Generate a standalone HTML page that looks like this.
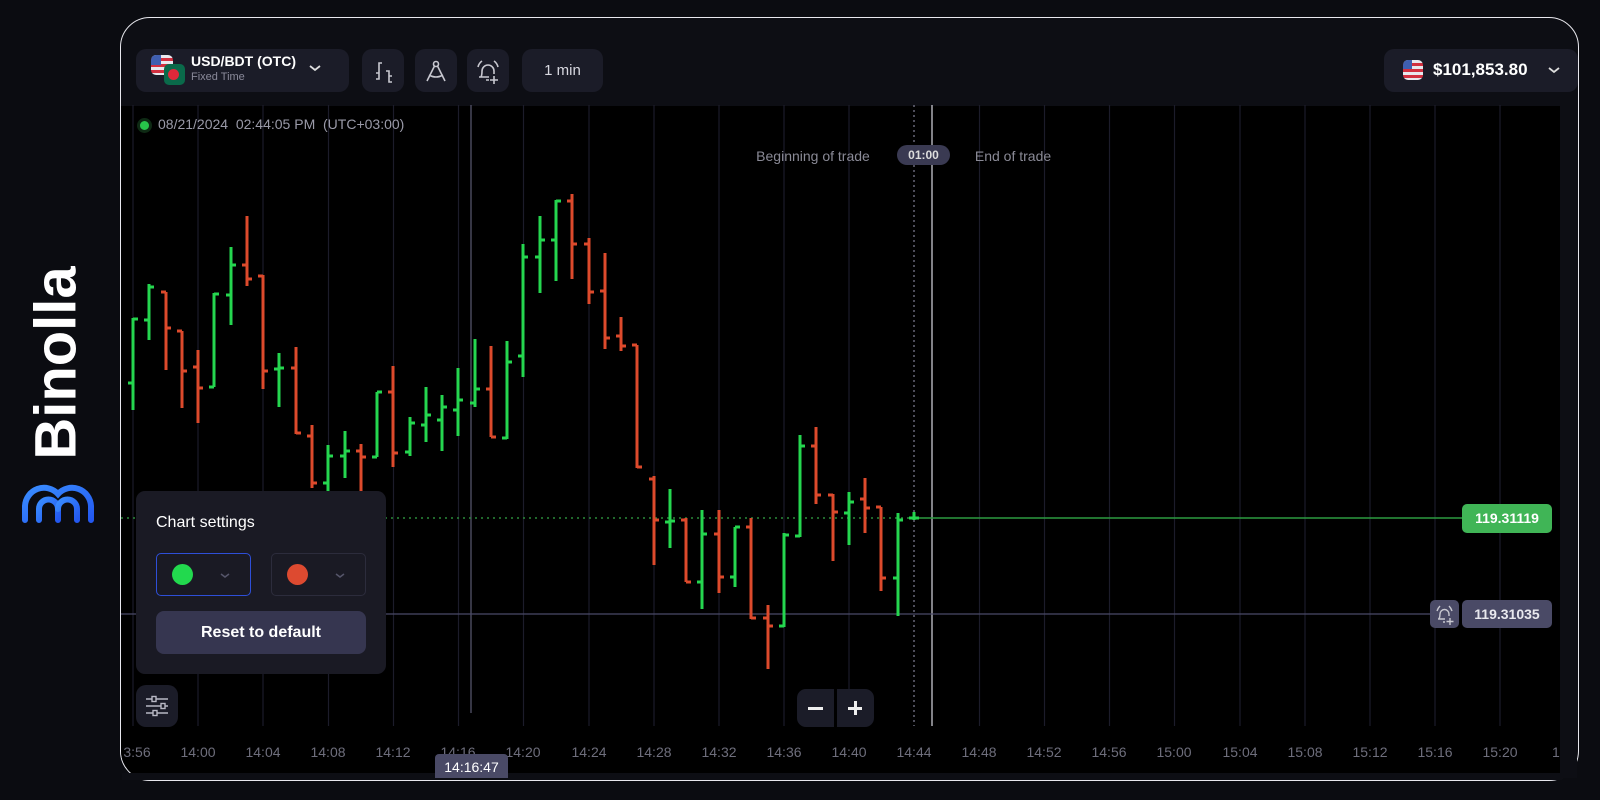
<!DOCTYPE html>
<html><head><meta charset="utf-8"><style>
*{margin:0;padding:0;box-sizing:border-box}
body{width:1600px;height:800px;background:#0b0c11;position:relative;overflow:hidden;font-family:"Liberation Sans",sans-serif;color:#fff}
.a{position:absolute}
.frame{left:120px;top:17px;width:1459px;height:764px;border:1.5px solid #e8e8ee;border-radius:30px;background:#0d0e14;overflow:hidden}
.btn{background:#1b1c28;border-radius:10px}
.ax{position:absolute;top:744px;font-size:14px;color:#6e6e7c;transform:translateX(-50%)}
</style></head><body>
<!-- logo -->
<div class="a" style="left:56px;top:363px;transform:translate(-50%,-50%) rotate(-90deg);font-size:58px;font-weight:bold;white-space:nowrap;letter-spacing:0px">Binolla</div>
<svg class="a" style="left:20px;top:482px" width="76" height="42" viewBox="0 0 76 42">
<defs><linearGradient id="g" x1="0" y1="0" x2="1" y2="1"><stop offset="0" stop-color="#3a8dff"/><stop offset="1" stop-color="#2358f0"/></linearGradient></defs>
<g fill="none" stroke="url(#g)" stroke-width="6" stroke-linecap="round">
<path d="M5 38 V24 A19 19 0 0 1 38 12 A19 19 0 0 1 71 24 V38"/>
<path d="M19 38 V27 A9.5 9.5 0 0 1 38 27 V38"/>
<path d="M38 27 A9.5 9.5 0 0 1 57 27 V38"/>
</g></svg>

<div class="a frame">
 <!-- chart black -->
 <div class="a" style="left:0;top:88px;width:1439px;height:668px;background:#000"></div>
</div>
<svg class="a" style="left:0;top:0" width="1600" height="800">
<g stroke="#1c1c2a" stroke-width="1.2">
<line x1="133" y1="105" x2="133" y2="726"/><line x1="198" y1="105" x2="198" y2="726"/><line x1="263" y1="105" x2="263" y2="726"/><line x1="328.5" y1="105" x2="328.5" y2="726"/><line x1="393.5" y1="105" x2="393.5" y2="726"/><line x1="458.5" y1="105" x2="458.5" y2="726"/><line x1="523.5" y1="105" x2="523.5" y2="726"/><line x1="589" y1="105" x2="589" y2="726"/><line x1="654" y1="105" x2="654" y2="726"/><line x1="719" y1="105" x2="719" y2="726"/><line x1="784" y1="105" x2="784" y2="726"/><line x1="849" y1="105" x2="849" y2="726"/><line x1="1044.5" y1="105" x2="1044.5" y2="726"/><line x1="1109.5" y1="105" x2="1109.5" y2="726"/><line x1="1174.5" y1="105" x2="1174.5" y2="726"/><line x1="1240" y1="105" x2="1240" y2="726"/><line x1="1305" y1="105" x2="1305" y2="726"/><line x1="1370" y1="105" x2="1370" y2="726"/><line x1="1435" y1="105" x2="1435" y2="726"/><line x1="1500" y1="105" x2="1500" y2="726"/><line x1="979.5" y1="105" x2="979.5" y2="726"/>
</g>
<line x1="471" y1="105" x2="471" y2="713" stroke="#54546a" stroke-width="1.3"/>
<line x1="914" y1="105" x2="914" y2="726" stroke="#77778a" stroke-width="1.3" stroke-dasharray="2 3"/>
<line x1="932" y1="105" x2="932" y2="726" stroke="#c8c8d0" stroke-width="1.3"/>
<line x1="121" y1="614" x2="1432" y2="614" stroke="#4a4a68" stroke-width="1.3"/>
<line x1="121" y1="518" x2="914" y2="518" stroke="#2a8a3a" stroke-width="1.5" stroke-dasharray="2 4"/>
<line x1="914" y1="518" x2="1462" y2="518" stroke="#2c9a40" stroke-width="1.5"/>
<g fill="none" stroke-width="3">
<g stroke="#25d64f">
<path d="M133 318V410M128 383H133M133 319H138"/><path d="M149 284V340M144 320H149M149 287H154"/><path d="M214 293V387M209 387H214M214 294H219"/><path d="M231 247V325M226 295H231M231 265H236"/><path d="M279 353V407M274 369H279M279 368H284"/><path d="M328 445V495M323 483H328M328 456H333"/><path d="M345 431V478M340 456H345M345 451H350"/><path d="M377 392V457M372 457H377M377 392H382"/><path d="M410 417V456M405 452H410M410 423H415"/><path d="M426 387V442M421 425H426M426 415H431"/><path d="M442 395V451M437 420H442M442 407H447"/><path d="M458 368V436M453 410H458M458 400H463"/><path d="M475 339V407M470 403H475M475 389H480"/><path d="M507 341V439M502 438H507M507 362H512"/><path d="M523 244V377M518 356H523M523 257H528"/><path d="M540 216V293M535 257H540M540 240H545"/><path d="M556 200V281M551 240H556M556 201H561"/><path d="M670 489V548M665 522H670M670 521H675"/><path d="M702 510V609M697 582H702M702 534H707"/><path d="M735 527V587M730 577H735M735 527H740"/><path d="M784 533V627M779 626H784M784 535H789"/><path d="M800 435V537M795 536H800M800 446H805"/><path d="M849 492V545M844 513H849M849 502H854"/><path d="M898 513V616M893 578H898M898 520H903"/><path d="M914 512V520M909 518H919"/>
</g>
<g stroke="#dd4a2c">
<path d="M166 292V370M161 292H166M166 328H171"/><path d="M182 331V408M177 331H182M182 371H187"/><path d="M198 350V423M193 367H198M198 388H203"/><path d="M247 216V286M242 265H247M247 279H252"/><path d="M263 275V389M258 276H263M263 371H268"/><path d="M296 347V434M291 368H296M296 433H301"/><path d="M312 425V488M307 436H312M312 483H317"/><path d="M361 444V492M356 451H361M361 457H366"/><path d="M393 366V467M388 392H393M393 453H398"/><path d="M491 346V437M486 389H491M491 437H496"/><path d="M572 194V279M567 201H572M572 244H577"/><path d="M589 238V304M584 244H589M589 292H594"/><path d="M605 253V349M600 291H605M605 338H610"/><path d="M621 317V351M616 336H621M621 346H626"/><path d="M637 345V468M632 345H637M637 467H642"/><path d="M654 476V565M649 479H654M654 520H659"/><path d="M686 518V582M681 520H686M686 582H691"/><path d="M719 510V593M714 534H719M719 577H724"/><path d="M751 518V619M746 527H751M751 618H756"/><path d="M768 605V669M763 618H768M768 626H773"/><path d="M816 427V504M811 446H816M816 495H821"/><path d="M833 494V561M828 495H833M833 512H838"/><path d="M865 478V533M860 499H865M865 508H870"/><path d="M881 507V591M876 507H881M881 578H886"/>
</g></g>
</svg>
<!-- right strip -->
<div class="a" style="left:1560px;top:105px;width:17px;height:673px;background:#0d0e14"></div>
<div class="a" style="left:122px;top:773px;width:1440px;height:7px;background:#0d0e14"></div>

<!-- top bar -->
<div class="a btn" style="left:136px;top:49px;width:213px;height:43px"></div>
<div class="a" style="left:151px;top:55px;width:22px;height:20px;border-radius:5px;background:repeating-linear-gradient(#e8e8ee 0 3px,#d23040 3px 6px);overflow:hidden"><div style="width:10px;height:10px;background:#3f5fb0"></div></div>
<div class="a" style="left:164px;top:64px;width:21px;height:21px;border-radius:5px;background:#0a6a4a"><div style="position:absolute;left:4px;top:5px;width:11px;height:11px;border-radius:50%;background:#e0283a"></div></div>
<div class="a" style="left:191px;top:53px;font-size:14px;font-weight:bold">USD/BDT (OTC)</div>
<div class="a" style="left:191px;top:71px;font-size:11px;color:#8a8a9a">Fixed Time</div>
<svg class="a" style="left:308px;top:63px" width="14" height="10"><path d="M2 3 L7 7 L12 3" stroke="#ddd" stroke-width="1.8" fill="none"/></svg>
<div class="a btn" style="left:362px;top:49px;width:42px;height:43px"></div>
<svg class="a" style="left:362px;top:49px" width="42" height="43" fill="none" stroke="#c8c8d0" stroke-width="1.6"><path d="M14 30 H17 V14 H20 M17 24 H14 M24 22 H27 V33 H30 M27 27 H30"/></svg>
<div class="a btn" style="left:415px;top:49px;width:42px;height:43px"></div>
<svg class="a" style="left:415px;top:49px" width="42" height="43" fill="none" stroke="#c8c8d0" stroke-width="1.6"><circle cx="21" cy="15" r="2.5"/><path d="M19.5 17 L12 32 M22.5 17 L30 32 M14 26 Q21 30 28 26"/></svg>
<div class="a btn" style="left:467px;top:49px;width:42px;height:43px"></div>
<svg class="a" style="left:467px;top:49px" width="42" height="43" fill="none" stroke="#c8c8d0" stroke-width="1.6"><path d="M14 28 Q15 26 15 22 A6 6 0 0 1 27 22 V25 M12 28 H22 M19 31 H22 M27 27 V35 M23 31 H31 M11 18 Q12 14 15 12 M31 18 Q30 14 27 12"/></svg>
<div class="a btn" style="left:522px;top:49px;width:81px;height:43px;font-size:15px;text-align:center;line-height:43px;color:#d8d8e0">1 min</div>
<div class="a btn" style="left:1384px;top:49px;width:194px;height:43px"></div>
<div class="a" style="left:1403px;top:60px;width:20px;height:20px;border-radius:5px;background:repeating-linear-gradient(#e8e8ee 0 3px,#d23040 3px 6px);overflow:hidden"><div style="width:9px;height:9px;background:#3f5fb0"></div></div>
<div class="a" style="left:1433px;top:60px;font-size:17px;font-weight:bold">$101,853.80</div>
<svg class="a" style="left:1547px;top:66px" width="14" height="10"><path d="M2 2 L7 6 L12 2" stroke="#ddd" stroke-width="1.8" fill="none"/></svg>

<!-- date -->
<div class="a" style="left:140px;top:121px;width:9px;height:9px;border-radius:50%;background:#27c44a;box-shadow:0 0 0 3px #0e2a14"></div>
<div class="a" style="left:158px;top:116px;font-size:14px;color:#9a9aa8;white-space:pre">08/21/2024  02:44:05 PM  (UTC+03:00)</div>
<div class="a" style="left:813px;top:148px;font-size:14px;color:#8a8a96;transform:translateX(-50%);white-space:nowrap">Beginning of trade</div>
<div class="a" style="left:897px;top:145px;width:53px;height:20px;border-radius:10px;background:#3a3a52;font-size:12px;font-weight:bold;color:#ddd;text-align:center;line-height:20px">01:00</div>
<div class="a" style="left:1013px;top:148px;font-size:14px;color:#8a8a96;transform:translateX(-50%);white-space:nowrap">End of trade</div>

<!-- price tags -->
<div class="a" style="left:1462px;top:504px;width:90px;height:29px;border-radius:5px;background:#40b556;font-size:14px;font-weight:bold;text-align:center;line-height:29px">119.31119</div>
<div class="a" style="left:1430px;top:600px;width:29px;height:28px;border-radius:5px;background:#4a4a66"></div>
<svg class="a" style="left:1430px;top:600px" width="29" height="28" fill="none" stroke="#c8c8d0" stroke-width="1.4"><path d="M9 19 Q10 17 10 14 A4.5 4.5 0 0 1 19 14 V16 M8 19 H15 M13 22 H15 M20 18 V25 M16.5 21.5 H23.5 M7 11 Q8 8 10 6 M22 11 Q21 8 19 6"/></svg>
<div class="a" style="left:1462px;top:600px;width:90px;height:28px;border-radius:5px;background:#4a4a66;font-size:14px;font-weight:bold;text-align:center;line-height:28px;color:#e8e8ee">119.31035</div>

<!-- chart settings -->
<div class="a" style="left:136px;top:491px;width:250px;height:183px;border-radius:9px;background:#1a1a24"></div>
<div class="a" style="left:156px;top:514px;font-size:16px">Chart settings</div>
<div class="a" style="left:156px;top:553px;width:95px;height:43px;border:1.5px solid #2e4fd8;border-radius:5px"></div>
<div class="a" style="left:172px;top:564px;width:21px;height:21px;border-radius:50%;background:#22d94e"></div>
<svg class="a" style="left:219px;top:572px" width="12" height="8"><path d="M2 2 L6 5 L10 2" stroke="#55556a" stroke-width="1.5" fill="none"/></svg>
<div class="a" style="left:271px;top:553px;width:95px;height:43px;border:1.5px solid #2c2c3c;border-radius:5px"></div>
<div class="a" style="left:287px;top:564px;width:21px;height:21px;border-radius:50%;background:#dd4a30"></div>
<svg class="a" style="left:334px;top:572px" width="12" height="8"><path d="M2 2 L6 5 L10 2" stroke="#55556a" stroke-width="1.5" fill="none"/></svg>
<div class="a" style="left:156px;top:611px;width:210px;height:43px;border-radius:8px;background:#363650;font-size:16px;font-weight:bold;text-align:center;line-height:43px">Reset to default</div>
<div class="a btn" style="left:136px;top:685px;width:42px;height:42px"></div>
<svg class="a" style="left:136px;top:685px" width="42" height="42" fill="none" stroke="#b8b8c4" stroke-width="1.4"><path d="M10 14 H32 M10 21 H32 M10 28 H32"/><rect x="16" y="11.5" width="4" height="5" fill="#1b1c28"/><rect x="25" y="18.5" width="4" height="5" fill="#1b1c28"/><rect x="17" y="25.5" width="4" height="5" fill="#1b1c28"/></svg>

<!-- zoom -->
<div class="a btn" style="left:797px;top:689px;width:37px;height:38px;border-radius:9px 0 0 9px"></div>
<div class="a btn" style="left:837px;top:689px;width:37px;height:38px;border-radius:0 9px 9px 0"></div>
<div class="a" style="left:808px;top:707px;width:15px;height:2.5px;background:#eee"></div>
<div class="a" style="left:848px;top:707px;width:14px;height:2.5px;background:#eee"></div>
<div class="a" style="left:854px;top:701px;width:2.5px;height:14px;background:#eee"></div>

<!-- axis -->
<div class="ax" style="left:137px">3:56</div>
<div class="ax" style="left:198px">14:00</div><div class="ax" style="left:263px">14:04</div><div class="ax" style="left:328px">14:08</div><div class="ax" style="left:393px">14:12</div><div class="ax" style="left:458px">14:16</div><div class="ax" style="left:523px">14:20</div><div class="ax" style="left:589px">14:24</div><div class="ax" style="left:654px">14:28</div><div class="ax" style="left:719px">14:32</div><div class="ax" style="left:784px">14:36</div><div class="ax" style="left:849px">14:40</div><div class="ax" style="left:914px">14:44</div><div class="ax" style="left:979px">14:48</div><div class="ax" style="left:1044px">14:52</div><div class="ax" style="left:1109px">14:56</div><div class="ax" style="left:1174px">15:00</div><div class="ax" style="left:1240px">15:04</div><div class="ax" style="left:1305px">15:08</div><div class="ax" style="left:1370px">15:12</div><div class="ax" style="left:1435px">15:16</div><div class="ax" style="left:1500px">15:20</div>
<div class="a" style="left:1552px;top:744px;font-size:14px;color:#6e6e7c;width:8px;overflow:hidden">15</div>
<div class="a" style="left:435px;top:754px;width:73px;height:24px;border-radius:4px 4px 0 0;background:#4a4a66;font-size:14px;text-align:center;line-height:26px">14:16:47</div>
<div class="a" style="left:1560px;top:105px;width:17px;height:673px;background:#0d0e14"></div>
</body></html>
